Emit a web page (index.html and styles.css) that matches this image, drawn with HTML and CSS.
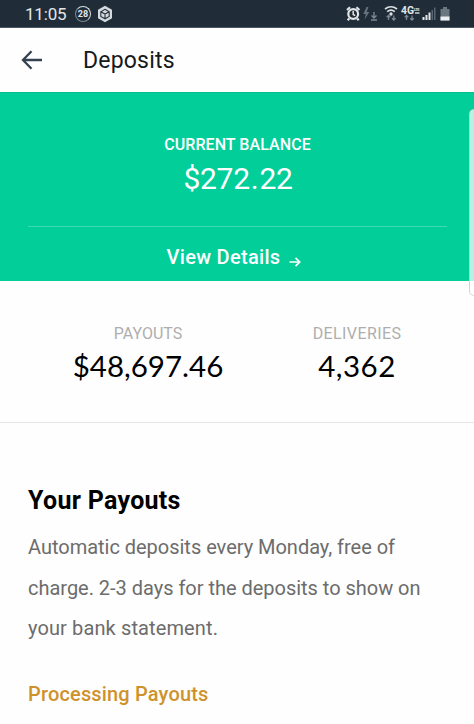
FILE: index.html
```html
<!DOCTYPE html>
<html lang="en">
<head>
<meta charset="utf-8">
<title>Deposits</title>
<link rel="stylesheet" href="styles.css">
</head>
<body>
<div class="status">
  <time class="clock">11:05</time>
  <span class="count">28</span>
  <svg class="cube" width="16" height="18" viewBox="0 0 16 18"><path d="M8 .8 15 4.800v8.400L8 17.200 1 13.200V4.800Z" fill="#d5dade"/><path d="m8 4.300 4.200 2.400v4.800L8 13.800l-4.200-2.300V6.700ZM3.800 6.700 8 9l4.200-2.300M8 9v4.800" fill="none" stroke="#24323f" stroke-width="1.100"/></svg>
  <svg class="tray" width="108" height="20" viewBox="0 0 108 20">
    <g fill="none" stroke="#e2e6e8" stroke-width="2.200">
      <circle cx="8.200" cy="10" r="4.900"/><path d="M8.200 7v3.500l2 1.200" stroke-width="1.500"/><path d="M2 6 5 3.300M14.400 6 11.400 3.300M4.200 14.500l-1.500 1.800M12.200 14.500l1.500 1.800"/>
    </g>
    <path d="m21.500 3-3.200 7h2.500l-1.300 5.500 4.800-7.500h-2.600l1.700-5Z" fill="#66737e"/>
    <path d="M29 8v6m-2.500-2.400L29 14l2.500-2.400M26 16h6" fill="none" stroke="#7b8790" stroke-width="1.400"/>
    <g fill="none" stroke="#dce1e4" stroke-width="1.700"><path d="M40 5q6-4.500 12 0M42.200 7.600q3.800-3 7.600 0"/><circle cx="46" cy="10" r=".8"/></g>
    <g fill="none" stroke="#7b8790" stroke-width="1.300"><path d="M43.500 16v-4.500m-1.800 1.700 1.800-1.800 1.800 1.800M48.800 11.500V16M47 14.200l1.800 1.800 1.800-1.800M61.500 16v-4.500m-1.800 1.700 1.800-1.800 1.800 1.800M67 11.500V16M65.200 14.200 67 16l1.800-1.800"/></g>
    <text x="56" y="10" class="network" textLength="13" lengthAdjust="spacingAndGlyphs">4G</text><text x="69" y="6.500" class="lte" textLength="5.500">LTE</text><path d="M70 9h4.500" stroke="#c8cfd3" stroke-width="1.500"/>
    <path d="M77.500 16v-3h2v3ZM80.500 16v-5h2v5ZM83.500 16V8.500h2V16Z" fill="#e2e6e8"/><path d="M86.500 16V6H88v10ZM89 16V3.500h1.500V16Z" fill="#586671"/>
    <path d="M95.500 5h2.500V3h4v2h2.500v11.500h-9Z" fill="#6b7780"/><path d="M95.500 12.500h9v4h-9Z" fill="#eceff0"/>
  </svg>
</div>
<header class="bar">
  <svg width="22" height="20" viewBox="0 0 22 20"><path d="M21 10H2M10.500 1.300 2 10l8.500 8.700" fill="none" stroke="#34414f" stroke-width="2.300"/></svg>
  <h1>Deposits</h1>
</header>
<section class="balance">
  <div class="label">CURRENT BALANCE</div>
  <div class="amount">$272<span class="point">.</span>22</div>
  <div class="details"><span>View Details</span><svg width="12" height="12" viewBox="0 0 12 12"><path d="M.5 6h10M6.500 1.800 10.700 6l-4.200 4.200" fill="none" stroke="#fff" stroke-width="1.700"/></svg></div>
  <div class="edge-handle"></div>
</section>
<section class="stats">
  <div class="stat payouts"><div class="stat-label">PAYOUTS</div><div class="stat-value">$48,697.46</div></div>
  <div class="stat deliveries"><div class="stat-label">DELIVERIES</div><div class="stat-value">4,362</div></div>
</section>
<main>
  <h2>Your Payouts</h2>
  <p><span class="l1">Automatic deposits every Monday, free of</span><br><span class="l2">charge. 2-3 days for the deposits to show on</span><br><span class="l3">your bank statement.</span></p>
  <h3>Processing Payouts</h3>
</main>
</body>
</html>
```
FILE: styles.css
```css
* { box-sizing: border-box; }
body { margin: 0; height: 724px; overflow: hidden; background: #fefefe; font-family: Roboto, "Liberation Sans", sans-serif; color: #000; }
svg { display: block; flex: none; }
.status { height: 28px; background: #202d39; border-bottom: 1px solid #4b5862; display: flex; align-items: center; padding: 1px 21px 0 25px; color: #e2e6e9; }
.clock { width: 50px; font-size: 17px; line-height: 26px; letter-spacing: -.2px; white-space: nowrap; }
.count { width: 16px; height: 16px; border: 1px solid #7c8790; border-top-color: #dbe0e3; border-right-color: #dbe0e3; border-radius: 50%; font-size: 9px; font-weight: 700; line-height: 14px; text-align: center; }
.cube { margin-left: 6px; }
.tray { margin-left: auto; }
.network { font: 700 10px Roboto, sans-serif; fill: #e2e6e8; }
.lte { font: 700 4px Roboto, sans-serif; fill: #dce1e4; }
.bar { height: 64px; display: flex; align-items: center; padding-left: 21px; }
h1 { margin: 1px 0 0 40px; font-size: 23px; line-height: 30px; font-weight: 400; letter-spacing: .2px; color: #16191c; }
.balance { position: relative; height: 189px; background: #02ce9a; border-top: 1px solid #0abd91; color: #fff; text-align: center; padding: 41px 27px 0 28px; }
.label { font-size: 16px; line-height: 22px; font-weight: 500; letter-spacing: .07px; }
.amount { font-size: 30px; line-height: 40px; margin-top: 3px; letter-spacing: -.3px; padding-left: 1px; }
.point { margin: 0 1px; }
.details { margin-top: 27px; border-top: 1px solid #3ddab0; padding-top: 17px; display: flex; justify-content: center; align-items: center; gap: 9px; font-size: 20px; line-height: 26px; font-weight: 500; letter-spacing: .3px; padding-right: 7px; }
.details svg { margin-top: 9px; }
.edge-handle { position: absolute; left: 469px; top: 16px; width: 10px; height: 187px; border: 1px solid rgba(180,195,190,.65); border-radius: 6px; background: rgba(255,255,255,.72); }
.stats { height: 142px; border-bottom: 1px solid #e6e6e6; display: grid; grid-template-columns: 296px 122px; padding-top: 42px; text-align: center; }
.stat-label { color: #aeaeae; font-size: 16px; line-height: 22px; }
.deliveries .stat-label { letter-spacing: .4px; }
.stat-value { font-family: Lato, sans-serif; font-size: 29.500px; line-height: 40px; margin-top: 1px; white-space: nowrap; }
.deliveries .stat-value { letter-spacing: .5px; }
main { padding: 61px 28px 0; }
h2 { margin: 0; font-size: 25px; line-height: 34px; font-weight: 700; letter-spacing: .3px; }
p { margin: 9px 0 0; font-size: 20px; line-height: 40.500px; letter-spacing: -.02px; color: #6c6c6c; white-space: nowrap; }
.l3 { letter-spacing: .12px; }
h3 { margin: 31px 0 0; font-size: 20px; line-height: 28px; font-weight: 500; letter-spacing: .16px; color: #cf922b; }
```
